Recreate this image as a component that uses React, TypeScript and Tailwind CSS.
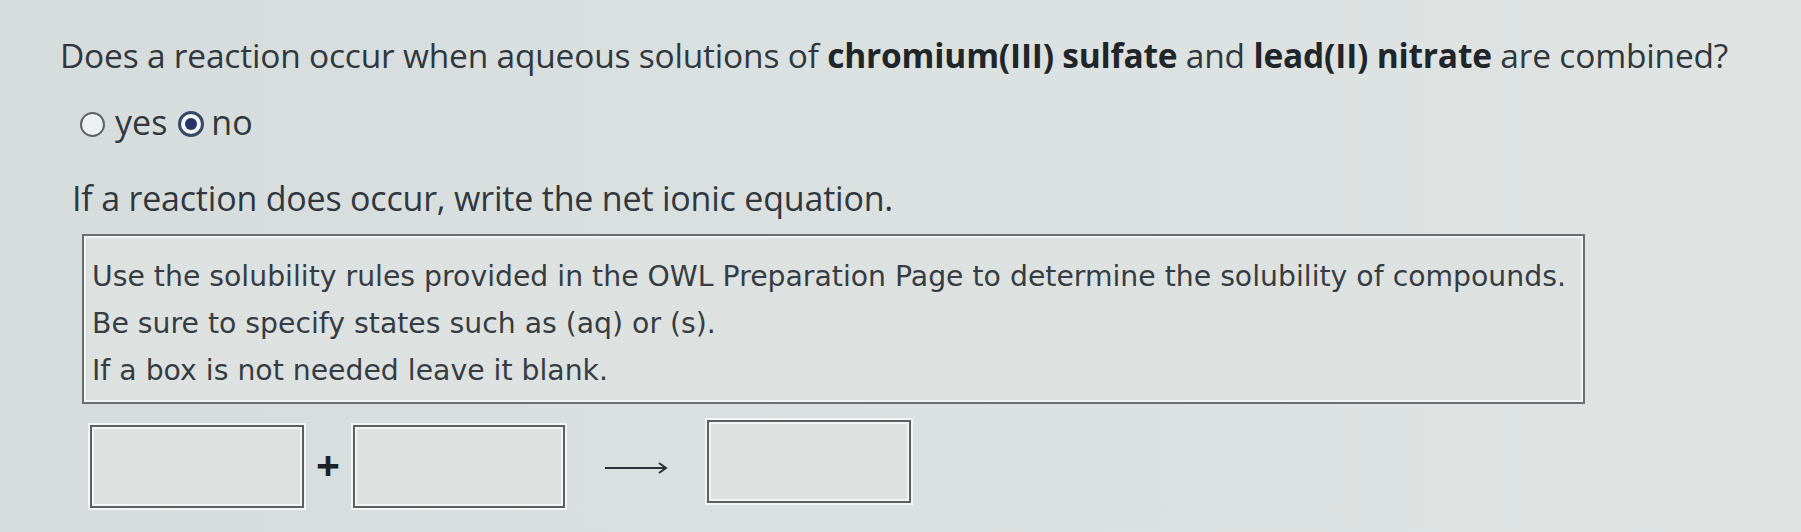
import React from "react";

const sans = { fontFamily: '"Open Sans", "Noto Sans", sans-serif' };
const verd = { fontFamily: '"DejaVu Sans", Verdana, sans-serif' };

function AnswerBox({ className = "" }: { className?: string }) {
  return (
    <div
      className={`h-[83px] border-2 border-[#5b5f60] bg-[#dde2e1] shadow-[0_0_0_2px_#f4f6f6,inset_0_0_0_2px_#f4f6f6] ${className}`}
    />
  );
}

export default function App() {
  return (
    <div className="w-[1801px] h-[532px] overflow-hidden bg-linear-to-r from-[#d6dcdb] via-[#dbe1e0] to-[#dfe4e3] text-[#30373d]">
      <div className="pl-[60px] pt-[33px]">
        <p style={sans} className="text-[33.5px] leading-[44px] tracking-[-0.2px] whitespace-nowrap">
          Does a reaction occur when aqueous solutions of{" "}
          <b className="font-bold text-[#1f2529]">chromium(III) sulfate</b> and{" "}
          <b className="font-bold text-[#1f2529]">lead(II) nitrate</b> are combined?
        </p>

        <div style={sans} className="mt-[25px] flex items-center text-[34px] leading-[40px] pl-[20px]">
          <span className="w-[25px] h-[25px] mt-[4px] rounded-full border-2 border-[#5d6266] bg-[#eef1f1]" />
          <span className="ml-[10px] mr-[11px]">yes</span>
          <span className="w-[26px] h-[26px] mt-[4px] rounded-full border-[3px] border-[#3b4766] bg-[#f3f5f5] flex items-center justify-center">
            <span className="w-[12px] h-[12px] rounded-full bg-[#27346a]" />
          </span>
          <span className="ml-[7px]">no</span>
        </div>

        <p style={sans} className="mt-[34px] ml-[12px] text-[34px] leading-[44px] tracking-[-0.2px] whitespace-nowrap">
          If a reaction does occur, write the net ionic equation.
        </p>

        <div
          style={verd}
          className="mt-[14px] ml-[22px] w-[1503px] h-[170px] border-2 border-[#6a6e70] shadow-[inset_0_0_0_2px_#f2f4f4] bg-[#dde2e1] pl-[8px] pt-[17px] text-[28.3px] leading-[47px] text-[#363c41] whitespace-nowrap"
        >
          <div>Use the solubility rules provided in the OWL Preparation Page to determine the solubility of compounds.</div>
          <div>Be sure to specify states such as (aq) or (s).</div>
          <div>If a box is not needed leave it blank.</div>
        </div>

        <div className="mt-[21px] ml-[30px] flex items-start">
          <AnswerBox className="w-[214px]" />
          <span style={sans} className="ml-[12px] mr-[13px] mt-[20px] text-[42px] font-bold leading-[40px] text-[#1c2226]">+</span>
          <AnswerBox className="w-[212px]" />
          <svg className="ml-[39px] mr-[39px] mt-[36px]" width="64" height="14" viewBox="0 0 64 14">
            <path d="M1 7 H62" stroke="#2a3036" strokeWidth="2" fill="none" />
            <path d="M55 2 L62 7 L55 12" stroke="#2a3036" strokeWidth="2" fill="none" />
          </svg>
          <AnswerBox className="w-[204px] -mt-[5px]" />
        </div>
      </div>
    </div>
  );
}
